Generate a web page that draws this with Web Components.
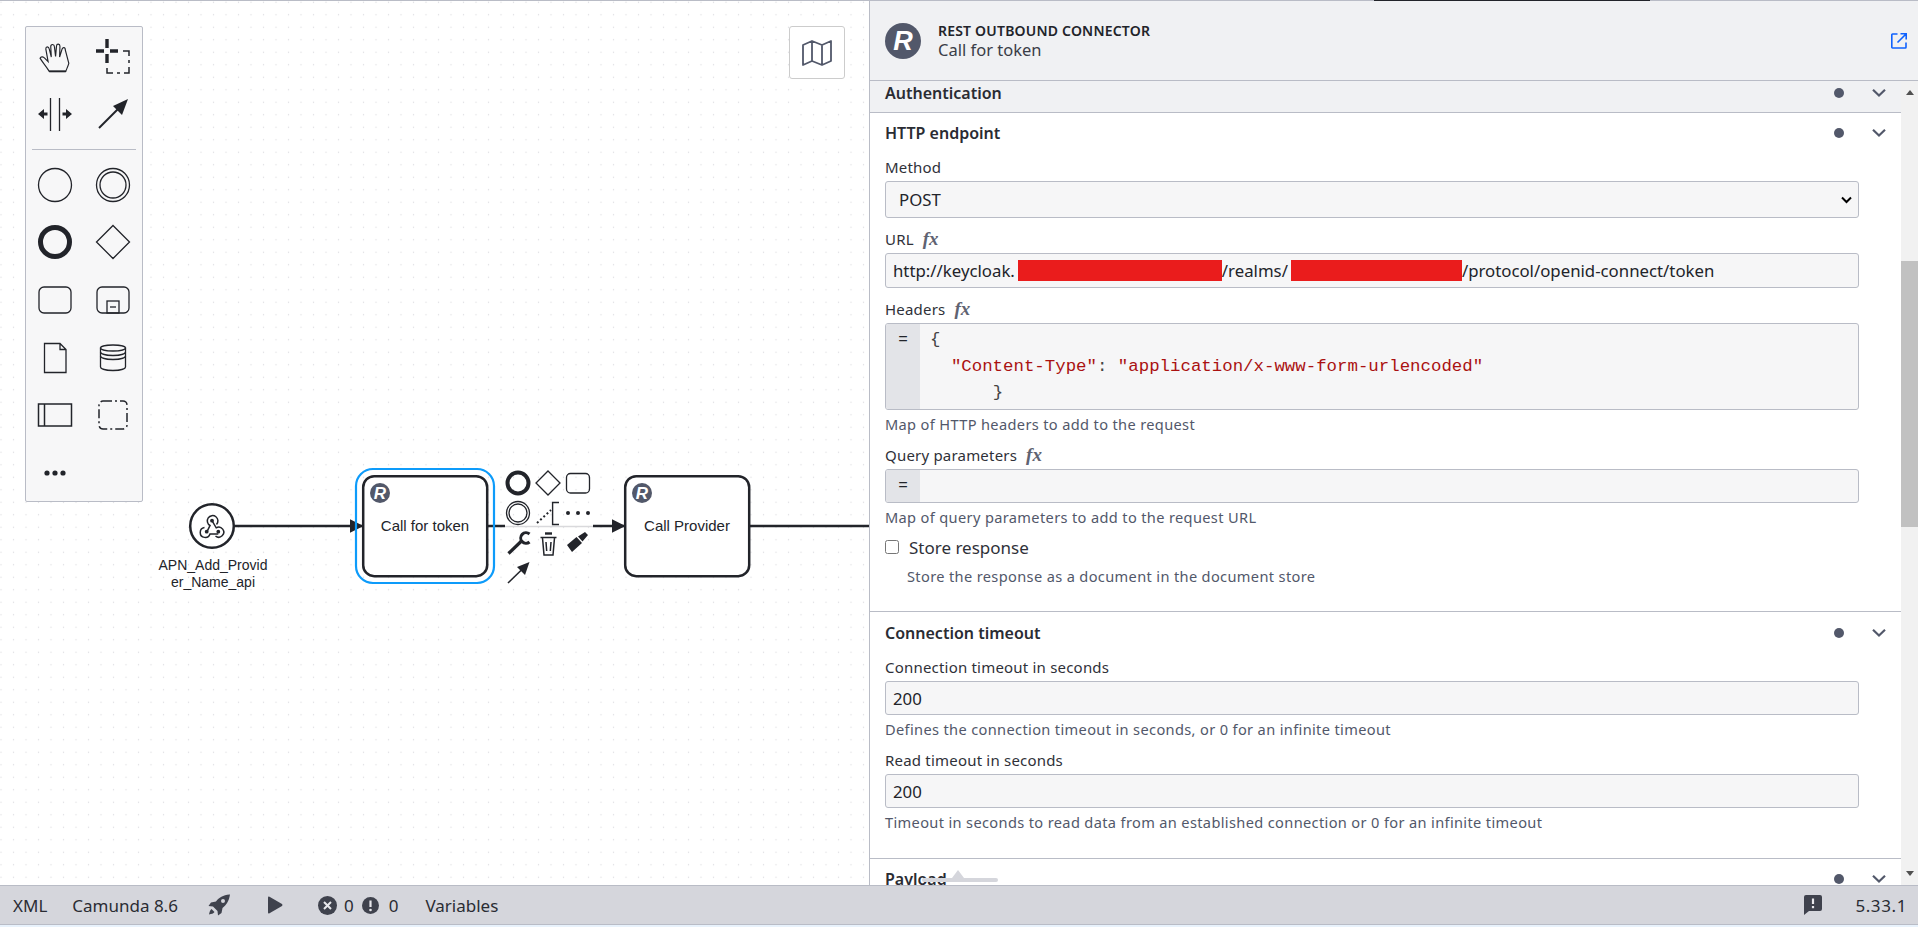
<!DOCTYPE html>
<html lang="en"><head><meta charset="utf-8"><title>Camunda Modeler</title>
<style>
html,body{margin:0;padding:0;height:100%;overflow:hidden;background:#fff}
body{font-family:"Noto Sans","Liberation Sans",sans-serif;color:#22242a}
</style></head><body>
<modeler-app>
  <bpmn-canvas slot="canvas"></bpmn-canvas>
  <props-panel slot="panel" title-top="REST OUTBOUND CONNECTOR" title-sub="Call for token">
    <collapsed-row>Authentication</collapsed-row>
    <prop-group heading="HTTP endpoint" pad="10" tail="25">
      <prop-field label="Method"><fake-select>POST</fake-select></prop-field>
      <prop-field label="URL" feel><text-box style="height:35px">http://keycloak.<red-mark style="width:204px;margin-left:3px"></red-mark>/realms/<red-mark style="width:171px;margin-left:3px"></red-mark>/protocol/openid-connect/token</text-box></prop-field>
      <prop-field label="Headers" feel desc="Map of HTTP headers to add to the request"><feel-box lines="3"><span class="p">{</span>
  <span class="s">"Content-Type"</span><span class="p">:</span> <span class="s">"application/x-www-form-urlencoded"</span>
      <span class="p">}</span></feel-box></prop-field>
      <prop-field label="Query parameters" feel desc="Map of query parameters to add to the request URL"><feel-box lines="1"></feel-box></prop-field>
      <check-field style="margin-top:-1px" label="Store response" desc="Store the response as a document in the document store"></check-field>
    </prop-group>
    <prop-group heading="Connection timeout" pad="11" tail="26">
      <prop-field label="Connection timeout in seconds" desc="Defines the connection timeout in seconds, or 0 for an infinite timeout"><text-box>200</text-box></prop-field>
      <prop-field label="Read timeout in seconds" desc="Timeout in seconds to read data from an established connection or 0 for an infinite timeout"><text-box>200</text-box></prop-field>
    </prop-group>
    <prop-group heading="Payload" pad="10" tail="0"></prop-group>
  </props-panel>
  <status-bar slot="status"></status-bar>
</modeler-app>

<template id="t-app"><style>
:host{display:grid;grid-template-rows:1px 884px 40px 2px;height:927px;width:1918px;overflow:hidden}
.top{display:flex;background:#b9bcc6}
.top i{display:block;margin-left:1374px;width:276px;background:#22242a}
.main{display:flex;min-height:0;position:relative}
.strip{background:#e8f2fc}
</style><div class="top"><i></i></div><div class="main"><slot name="canvas"></slot><slot name="panel"></slot></div><slot name="status"></slot><div class="strip"></div></template>

<template id="t-canvas"><style>
:host{display:block;position:relative;width:869px;height:884px;flex:none;overflow:hidden;background-color:#fff;
background-image:radial-gradient(circle at center,#dcdce0 0,#dcdce0 .6px,transparent 1px);background-size:12.5px 12.5px;background-position:-5.25px -5px}
svg.d{position:absolute;left:0;top:-1px;width:869px;height:885px}
svg.d text{font-family:"Liberation Sans",Arial,sans-serif;font-size:14px;fill:#22242a;text-anchor:middle}
svg.d text.t{font-size:15px}
svg.d text.r{font-size:17px;fill:#fff;font-style:italic;font-weight:700}
.map{position:absolute;left:789px;top:25px;width:56px;height:53px;box-sizing:border-box;border:1px solid #ccc;border-radius:3px;background:#fff;display:flex;align-items:center;justify-content:center}
tool-palette{position:absolute;left:25px;top:25px}
</style>
<svg class="d" viewBox="0 0 869 885" xmlns="http://www.w3.org/2000/svg">
 <defs><marker id="ah" markerWidth="14" markerHeight="14" refX="13.5" refY="7" orient="auto" markerUnits="userSpaceOnUse"><path d="M0 0 14 7 0 14z" fill="#22242a"/></marker></defs>
 <g fill="none" stroke="#22242a" stroke-width="2.5">
  <path d="M235 526H363" marker-end="url(#ah)"/>
  <path d="M488 526H505"/>
  <path d="M505 526.5H593" stroke="#d9d9dc" stroke-width="1.5"/>
  <path d="M593 526H625" marker-end="url(#ah)"/>
  <path d="M750 526H869"/>
  <circle cx="212" cy="526" r="21.8" fill="#fff"/>
  <rect x="363.2" y="476.2" width="124" height="100" rx="11" fill="#fff"/>
  <rect x="625.2" y="476.2" width="124" height="100" rx="11" fill="#fff"/>
  <rect x="356" y="469" width="138" height="114" rx="17" stroke="#0d9bfa" stroke-width="2.2"/>
 </g>
 <g fill="none" stroke="#22242a" stroke-width="1.5">
  <path d="M204.5 527.500A5 5 0 1 0 210 534H218.300"/>
  <path d="M207 531.700 210 525.500A5.300 5.300 0 1 1 216.500 524.500"/>
  <path d="M212 520.700 216.200 527.800A5 5 0 1 1 215.500 536"/>
 </g>
 <g fill="#22242a"><circle cx="212" cy="520.700" r="1.900"/><circle cx="206.700" cy="531.700" r="1.900"/><circle cx="218.300" cy="531.700" r="1.900"/></g>
 <g fill="#52586a"><circle cx="380" cy="493" r="10"/><circle cx="642" cy="493" r="10"/></g>
 <text class="r" x="380" y="499">R</text><text class="r" x="642" y="499">R</text>
 <text class="t" x="425" y="531">Call for token</text>
 <text class="t" x="687" y="531">Call Provider</text>
 <text x="213" y="570">APN_Add_Provid</text>
 <text x="213" y="587">er_Name_api</text>
 <g fill="none" stroke="#22242a">
  <circle cx="518" cy="483" r="10.5" stroke-width="4"/>
  <path d="M548 471 560 483 548 495 536 483z" stroke-width="1.3"/>
  <rect x="566.5" y="473.5" width="23" height="19.5" rx="4" stroke-width="1.3"/>
  <circle cx="518" cy="513" r="11.5" stroke-width="1.3"/><circle cx="518" cy="513" r="9" stroke-width="1.3"/>
  <path d="M537 523 551 510" stroke-width="2" stroke-dasharray="2 2.4"/>
  <path d="M559 502.5H552.6V524.5H559" stroke-width="1.4"/>
  <path d="M508.500 553.500 521 541.500" stroke-width="3.200"/>
  <path d="M529.500 534A5.300 5.300 0 1 0 529.500 542" stroke-width="3"/>
  <path d="M540.5 537.5H556.5M542.5 538 544 555H553L554.5 538M546 542 546.7 551M551 542 550.3 551" stroke-width="1.5"/>
  <path d="M545 533.5H552" stroke-width="2.4"/>
  <path d="M508 583 524 567.5" stroke-width="1.6"/>
 </g>
 <g fill="#22242a">
  <circle cx="568" cy="513" r="2"/><circle cx="578" cy="513" r="2"/><circle cx="588" cy="513" r="2"/>
  <path d="M529.5 562 525 575 517 567z"/>
  <path d="M567 545 576.500 537 582 543 572 552zM578 536.500 585 532 588 535 582.500 541.500z"/>
 </g>
</svg>
<tool-palette></tool-palette>
<div class="map"><svg width="30" height="26" viewBox="0 0 30 26" fill="none" stroke="#52586a" stroke-width="1.8" stroke-linejoin="round"><path d="M1 5 10 1 20 5 29 1V21L20 25 10 21 1 25zM10 1V21M20 5V25"/></svg></div>
</template>

<template id="t-pal"><style>
:host{display:block;width:118px;box-sizing:border-box;border:1px solid #b9bcc6;border-radius:2px;background:#f7f7f8;height:476px}
.g{display:grid;grid-template-columns:58px 58px;grid-auto-rows:57.6px;justify-items:center;align-items:center}
.g.a{grid-auto-rows:58px}
hr{border:0;height:1px;background:#b9bcc6;margin:6px 6px 6px 6px}
svg{display:block;width:40px;height:40px;fill:none;stroke:#22242a;stroke-width:1.3}
</style>
<div class="g a">
 <svg viewBox="0 0 40 40"><g transform="translate(20 21) scale(1.15) translate(-17 -20.500)" stroke-width="1"><path d="M12 33C9 28 6 25 4 21.500c1-2 3-1 4 0l3 3-2-11c0-2.400 2.500-2.400 3 0l1.800 7-.5-9c0-2.400 3-2.500 3.200 0l1 8.500 .8-9c.2-2.400 3-2.200 3 .2l-.3 9.300 2.200-7c.8-2 3-1.300 2.700 .7L29 26c-.8 3-2 5-2.600 7z"/><path d="M12 33H26.400" stroke-width="1.600"/></g></svg>
 <svg viewBox="0 0 40 40"><path d="M3 15H11M17 15H25M14 3V12M14 18V27" stroke-width="3.400"/><path d="M30 15H36V20M36 24V27M36 31V37H31M27 37H24M20 37H14V32" stroke-width="1.500"/></svg>
 <svg viewBox="0 0 40 40"><path d="M15.500 4V37M24.500 4V37" stroke-width="1.300"/><path d="M9 20H12.500M31 20H27.500" stroke-width="3"/><path d="M3 20 9 15V25zM37 20 31 15V25z" fill="#22242a" stroke="none"/></svg>
 <svg viewBox="0 0 40 40"><path d="M6 34 25 15" stroke-width="2"/><path d="M35 5 20 12 29 21z" fill="#22242a" stroke="none"/></svg>
</div>
<hr>
<div class="g">
 <svg viewBox="0 0 40 40"><circle cx="20" cy="20" r="16.500"/></svg>
 <svg viewBox="0 0 40 40"><circle cx="20" cy="20" r="16.500"/><circle cx="20" cy="20" r="13"/></svg>
 <svg viewBox="0 0 40 40"><circle cx="20" cy="20" r="14.500" stroke-width="5"/></svg>
 <svg viewBox="0 0 40 40"><path d="M20 3.500 36.500 20 20 36.500 3.500 20z"/></svg>
 <svg viewBox="0 0 40 40"><rect x="4" y="7" width="32" height="26" rx="5"/></svg>
 <svg viewBox="0 0 40 40"><rect x="4" y="7" width="32" height="26" rx="5"/><rect x="14" y="21" width="12" height="12"/><path d="M17 27H23"/></svg>
 <svg viewBox="0 0 40 40"><path d="M9.500 5.500H25L31 11.500V34.500H9.500zM25 5.500V11.500H31"/></svg>
 <svg viewBox="0 0 40 40"><path d="M7.500 9.500V29c0 2 5.500 3.500 12.500 3.500S32.500 31 32.500 29V9.500"/><ellipse cx="20" cy="10" rx="12.500" ry="3"/><path d="M7.500 14c0 2 5.500 3.500 12.500 3.500S32.500 16 32.500 14M7.500 18c0 2 5.500 3.500 12.500 3.500S32.500 20 32.500 18"/></svg>
 <svg viewBox="0 0 40 40"><rect x="3.500" y="9" width="33" height="22" stroke-width="1.500"/><path d="M9.500 9V31" stroke-width="1.500"/></svg>
 <svg viewBox="0 0 40 40"><rect x="6" y="6" width="28" height="28" rx="4" stroke-dasharray="9 3 2 3" stroke-width="1.500"/></svg>
 <svg viewBox="0 0 40 40"><g fill="#22242a" stroke="none"><circle cx="12" cy="20" r="2.600"/><circle cx="20" cy="20" r="2.600"/><circle cx="28" cy="20" r="2.600"/></g></svg>
</div>
</template>

<template id="t-panel"><style>
:host{display:flex;flex-direction:column;flex:1;min-width:0;height:884px;position:relative;border-left:1px solid #b9bcc6;font-size:14px}
header{box-sizing:border-box;background:#f0f1f3;border-bottom:1px solid #b9bcc6;flex:none;display:flex;align-items:center;padding:0 11px 0 15px;height:80px}
.logo{width:36px;height:36px;flex:none;margin-right:17px}
.t{flex:1;line-height:20px;color:#22242a}
.a{font-weight:600;font-size:14px;letter-spacing:.2px}
.b{font-size:16.500px;margin-top:-1px;color:#3a3d47}
.body{flex:1;display:flex;min-height:0}
.scroll{flex:1;min-width:0;overflow:hidden}
.bar{width:17px;flex:none;background:#f1f1f1;display:flex;flex-direction:column;align-items:center}
.bar .up,.bar .dn{width:0;height:0;border-left:4.500px solid transparent;border-right:4.500px solid transparent;flex:none}
.bar .up{border-bottom:5px solid #505050;margin-top:9px}
.bar .dn{border-top:5px solid #505050;margin-top:auto;margin-bottom:9px}
.thumb{width:17px;height:266px;background:#c1c1c1;margin-top:166px;flex:none}
.caret{position:absolute;left:52px;bottom:3px;width:76px;height:4px;border-radius:2px;background:#d5d6dc}
.caret::before{content:"";position:absolute;left:30px;top:-8px;border:6px solid transparent;border-top:0;border-bottom:8px solid #d5d6dc}
</style>
<header>
 <svg class="logo" viewBox="0 0 36 36"><circle cx="18" cy="18" r="18" fill="#52586a"/><text x="18" y="27" text-anchor="middle" font-family="Liberation Sans,sans-serif" font-style="italic" font-weight="700" font-size="27" fill="#fff">R</text></svg>
 <div class="t"><div class="a" id="a"></div><div class="b" id="b"></div></div>
 <svg width="16" height="16" viewBox="0 0 16 16" fill="none" stroke="#0f62fe" stroke-width="1.600"><path d="M6.500 1H1.500a.7.7 0 0 0-.7.7V14.300a.7.7 0 0 0 .7.7H14.300a.7.7 0 0 0 .7-.7V9.500M6.500 9.500 15 1M9.500 .8H15.200V6.500"/></svg>
</header>
<div class="body"><div class="scroll"><slot></slot></div>
<div class="bar"><div class="up"></div><div class="thumb"></div><div class="dn"></div></div></div>
<div class="caret"></div>
</template>

<template id="t-row"><style>
:host{display:flex;align-items:center;height:32px;box-sizing:border-box;background:#f0f1f3;border-bottom:1px solid #b9bcc6;padding:0 14px 8px 15px;font-weight:600;font-size:16px;color:#2a2c33}
.g{flex:1}
</style><div class="g"><slot></slot></div><group-status></group-status></template>

<template id="t-status"><style>
:host{display:flex;align-items:center;gap:0;flex:none}
.dot{width:10px;height:10px;border-radius:50%;background:#52586a;margin-right:27px}
svg{display:block}
</style><div class="dot"></div><svg width="16" height="10" viewBox="0 0 16 10" fill="none" stroke="#52586a" stroke-width="2.200"><path d="M2 1.800 8 7.500 14 1.800"/></svg></template>

<template id="t-group"><style>
:host{display:block;border-bottom:1px solid #b9bcc6}
:host(:last-of-type){border-bottom:0}
.h{display:flex;align-items:center;height:20px;padding:var(--pad,10px) 14px 14px 15px;font-weight:600;font-size:16px;color:#2a2c33}
.g{flex:1}
.c{display:flex;flex-direction:column;gap:11px;padding:0 42px 0 15px}
</style><div class="h"><div class="g" id="h"></div><group-status></group-status></div><div class="c"><slot></slot></div></template>

<template id="t-field"><style>
:host{display:block}
.l{display:flex;align-items:center;height:20px;line-height:20px;margin-bottom:4px;font-size:15px;color:#2f3139;letter-spacing:.2px}
.fx{font-family:"Liberation Serif",serif;font-style:italic;font-weight:700;font-size:19px;color:#5f6372;margin-left:9px;letter-spacing:0}
.d{height:20px;line-height:20px;margin-top:4px;font-size:14.600px;letter-spacing:.35px;color:#52586a}
</style><div class="l"><span id="l"></span><span class="fx" id="fx">fx</span></div><slot></slot><div class="d" id="d"></div></template>

<template id="t-box"><style>
:host{display:flex;align-items:center;box-sizing:border-box;height:34px;padding:0 7px;border:1px solid #b9bcc6;border-radius:3px;background:#f6f6f7;font-size:16.800px;color:#22242a;white-space:pre;overflow:hidden}
</style><slot></slot></template>

<template id="t-select"><style>
:host{display:flex;align-items:center;justify-content:space-between;box-sizing:border-box;height:37px;padding:0 6px 0 13px;border:1px solid #b9bcc6;border-radius:3px;background:#f6f6f7;font-size:16.800px;color:#22242a}
</style><slot></slot><svg width="11" height="8" viewBox="0 0 11 8" fill="none" stroke="#000" stroke-width="2"><path d="M1 1.500 5.500 6 10 1.500"/></svg></template>

<template id="t-red"><style>
:host{display:block;flex:none;height:21px;background:#ea1c1c;margin-top:-1px}
</style></template>

<template id="t-feel"><style>
:host{display:flex;box-sizing:border-box;height:var(--h,87px);border:1px solid #b9bcc6;border-radius:3px;background:#f6f6f7;overflow:hidden}
.gut{width:34px;flex:none;background:#e3e4e8;text-align:center;font:16px/26.600px "Liberation Mono",monospace;color:#22242a;padding-top:3px;box-sizing:border-box}
pre{margin:0;padding:3px 0 0 10px;font:17.400px/26.600px "Liberation Mono",monospace;color:#22242a;white-space:pre;flex:1;min-width:0;overflow:hidden}
::slotted(.s){color:#a11}
::slotted(.p){color:#444}
</style><div class="gut">=</div><pre><slot></slot></pre></template>

<template id="t-check"><style>
:host{display:block}
.r{display:flex;align-items:center;height:20px;font-size:17px;color:#2f3139}
.b{width:14px;height:14px;box-sizing:border-box;border:1px solid #767676;border-radius:2.500px;background:#fff;margin-right:10px;flex:none}
.d{height:20px;line-height:20px;margin:9px 0 0 22px;font-size:14.600px;letter-spacing:.35px;color:#52586a}
</style><div class="r"><div class="b"></div><span id="l"></span></div><div class="d" id="d"></div></template>

<template id="t-statusbar"><style>
:host{display:flex;align-items:center;box-sizing:border-box;height:40px;background:#d5d6dc;border-top:1px solid #b9bcc6;border-bottom:1px solid #b9bcc6;font-size:17px;color:#2a2c33;position:relative;z-index:2}
.x{margin-left:13px}
.c{margin-left:25px}
.rocket{margin-left:30px}
.play{margin-left:38px}
.err{margin-left:35px}
.n{margin-left:7px}
.w{margin-left:8px}
.v{margin-left:27px}
.sp{flex:1}
.ver{margin-left:33px;margin-right:11px;letter-spacing:.6px}
svg{display:block;flex:none}
</style>
<span class="x">XML</span><span class="c">Camunda 8.6</span>
<svg class="rocket" width="22" height="22" viewBox="0 0 22 22" fill="#3f424d"><path d="M21.500 .5C15 1 11 3.500 8 7.500L3 8.500 .5 12l4.500 .5 4.500 4.500 .5 4.500 3.500-2.500 1-5c4-3 6.500-7 7.500-13.500zM15 5a2 2 0 1 1 0 4 2 2 0 0 1 0-4zM3.500 15c-1.500 1-2 3-2.500 5.500 2.500-.5 4.500-1 5.500-2.500z"/></svg>
<svg class="play" width="15" height="18" viewBox="0 0 15 18" fill="#3f424d"><path d="M0 1.500Q0 0 1.500 .7L14 8q1 1 0 2L1.500 17.300Q0 18 0 16.500z"/></svg>
<svg class="err" width="19" height="19" viewBox="0 0 19 19"><circle cx="9.500" cy="9.500" r="9.500" fill="#3f424d"/><path d="M6 6 13 13M13 6 6 13" stroke="#e8e8ec" stroke-width="2"/></svg>
<span class="n">0</span>
<svg class="w" width="17" height="17" viewBox="0 0 17 17"><circle cx="8.500" cy="8.500" r="8.500" fill="#3f424d"/><path d="M8.500 3.500V10" stroke="#e8e8ec" stroke-width="2.200"/><circle cx="8.500" cy="13" r="1.300" fill="#e8e8ec"/></svg>
<span class="n" style="margin-left:10px">0</span>
<span class="v">Variables</span><span class="sp"></span>
<svg width="18" height="20" viewBox="0 0 18 20" fill="#3f424d"><path d="M2 0H16a2 2 0 0 1 2 2V14a2 2 0 0 1-2 2H5L0 20V2a2 2 0 0 1 2-2z"/><path d="M9 3.500V9" stroke="#e8e8ec" stroke-width="2.200"/><rect x="7.900" y="11" width="2.200" height="2.200" fill="#e8e8ec"/></svg>
<span class="ver">5.33.1</span></template>

<script>
function shadow(el,id){const r=el.attachShadow({mode:"open"});r.appendChild(document.getElementById(id).content.cloneNode(true));return r}
const simple={"modeler-app":"t-app","tool-palette":"t-pal","collapsed-row":"t-row","group-status":"t-status","text-box":"t-box","fake-select":"t-select","red-mark":"t-red","status-bar":"t-statusbar","bpmn-canvas":"t-canvas"};
for(const [n,id] of Object.entries(simple)){customElements.define(n,class extends HTMLElement{constructor(){super();shadow(this,id)}})}
customElements.define("props-panel",class extends HTMLElement{constructor(){super();this.r=shadow(this,"t-panel")}
 connectedCallback(){this.r.getElementById("a").textContent=this.getAttribute("title-top");this.r.getElementById("b").textContent=this.getAttribute("title-sub")}});
customElements.define("prop-group",class extends HTMLElement{constructor(){super();this.r=shadow(this,"t-group")}
 connectedCallback(){this.r.getElementById("h").textContent=this.getAttribute("heading");this.style.setProperty("--pad",(this.getAttribute("pad")||10)+"px");this.style.paddingBottom=(this.getAttribute("tail")||0)+"px"}});
customElements.define("prop-field",class extends HTMLElement{constructor(){super();this.r=shadow(this,"t-field")}
 connectedCallback(){this.r.getElementById("l").textContent=this.getAttribute("label");if(!this.hasAttribute("feel"))this.r.getElementById("fx").remove();const d=this.r.getElementById("d");if(this.hasAttribute("desc"))d.textContent=this.getAttribute("desc");else d.remove()}});
customElements.define("check-field",class extends HTMLElement{constructor(){super();this.r=shadow(this,"t-check")}
 connectedCallback(){this.r.getElementById("l").textContent=this.getAttribute("label");this.r.getElementById("d").textContent=this.getAttribute("desc")}});
customElements.define("feel-box",class extends HTMLElement{constructor(){super();shadow(this,"t-feel")}
 connectedCallback(){this.style.setProperty("--h",this.getAttribute("lines")=="3"?"87px":"34px")}});
</script>
</body></html>
